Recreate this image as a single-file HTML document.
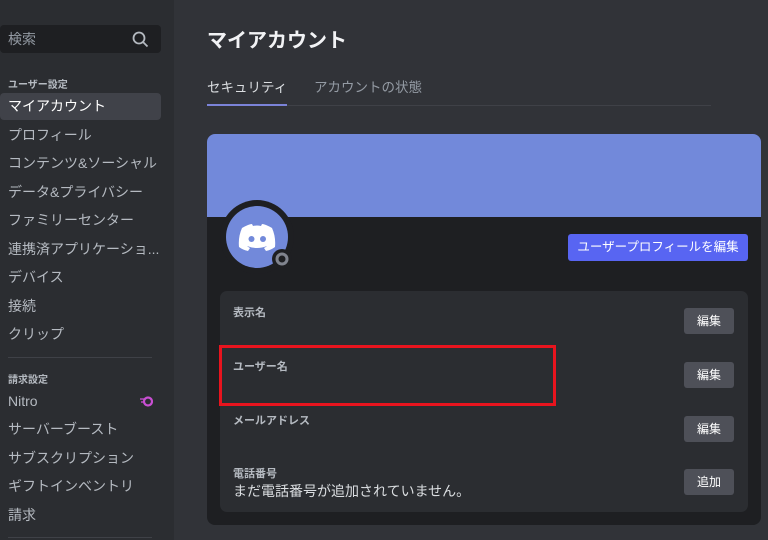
<!DOCTYPE html>
<html><head><meta charset="utf-8"><style>
*{margin:0;padding:0;box-sizing:border-box}
body{width:768px;height:540px;overflow:hidden;background:#313338;font-family:"Liberation Sans","Noto Sans CJK JP",sans-serif;position:relative}
.side{position:absolute;left:0;top:0;width:174px;height:540px;background:#2b2d31}
.search{position:absolute;left:0;top:25px;width:161px;height:28px;background:#1e1f22;border-radius:4px;color:#949ba4;font-size:14px;line-height:28px;padding-left:8px}
.hd{position:absolute;left:8px;font-size:10px;color:#b5bac1;font-weight:bold}
.it{position:absolute;left:0;width:161px;height:27px;line-height:27px;padding-left:8px;font-size:14px;color:#b5bac1;border-radius:4px;white-space:nowrap}
.sel{background:#404249;color:#fff}
.dv{position:absolute;left:8px;width:144px;height:1px;background:#3f4147}
.abs{position:absolute}
.btn{position:absolute;left:684px;width:50px;height:26px;background:#4e5058;border-radius:3px;color:#fff;font-size:12px;text-align:center;line-height:26px}
.lbl{position:absolute;left:233px;font-size:11px;color:#b5bac1;font-weight:bold}
</style></head><body>
<div class="side">
<div class="search">検索
<svg class="abs" style="left:132px;top:6px" width="17" height="17" viewBox="0 0 17 17"><circle cx="7" cy="7" r="5.5" fill="none" stroke="#b5bac1" stroke-width="1.8"/><line x1="11" y1="11" x2="15.5" y2="15.5" stroke="#b5bac1" stroke-width="1.8"/></svg></div>
<div class="hd" style="top:76px">ユーザー設定</div>
<div class="it sel" style="top:93px">マイアカウント</div>
<div class="it" style="top:122px">プロフィール</div>
<div class="it" style="top:150px">コンテンツ&amp;ソーシャル</div>
<div class="it" style="top:179px">データ&amp;プライバシー</div>
<div class="it" style="top:207px">ファミリーセンター</div>
<div class="it" style="top:236px">連携済アプリケーショ...</div>
<div class="it" style="top:264px">デバイス</div>
<div class="it" style="top:293px">接続</div>
<div class="it" style="top:321px">クリップ</div>
<div class="dv" style="top:357px"></div>
<div class="hd" style="top:371px">請求設定</div>
<div class="it" style="top:388px">Nitro</div>
<svg class="abs" style="left:140px;top:396px" width="13" height="11" viewBox="0 0 13 11"><circle cx="8" cy="5.5" r="4" fill="none" stroke="#c94fd3" stroke-width="2.2"/><line x1="0" y1="3" x2="4" y2="3" stroke="#c94fd3" stroke-width="1.3"/><line x1="1" y1="6" x2="4" y2="6" stroke="#c94fd3" stroke-width="1.3"/></svg>
<div class="it" style="top:416px">サーバーブースト</div>
<div class="it" style="top:445px">サブスクリプション</div>
<div class="it" style="top:473px">ギフトインベントリ</div>
<div class="it" style="top:502px">請求</div>
<div class="dv" style="top:537px"></div>
</div>
<div class="abs" style="left:207px;top:24px;font-size:20px;font-weight:bold;color:#f2f3f5">マイアカウント</div>
<div class="abs" style="left:207px;top:76px;font-size:13.5px;color:#dbdee1">セキュリティ</div>
<div class="abs" style="left:314px;top:76px;font-size:13.5px;color:#949ba4">アカウントの状態</div>
<div class="abs" style="left:207px;top:105px;width:504px;height:1px;background:#3f4147"></div>
<div class="abs" style="left:207px;top:104px;width:80px;height:2px;background:#7b83d8"></div>
<div class="abs" style="left:207px;top:134px;width:554px;height:391px;background:#1e1f22;border-radius:8px;overflow:hidden">
<div style="height:83px;background:#7289da"></div>
</div>
<svg class="abs" style="left:215px;top:196px" width="90" height="80" viewBox="215 196 90 80">
<circle cx="257" cy="237" r="37" fill="#1e1f22"/>
<circle cx="257" cy="237" r="31" fill="#7289da"/>
<path d="M242 228 q7-4 10-4 l1 2 q4-1 8 0 l1-2 q3 0 10 4 q4 9 3 19 q-4 3-9 4 l-2-3 q2-1 3-2 q-10 4-20 0 q1 1 3 2 l-2 3 q-5-1-9-4 q-1-10 3-19z" fill="#fff"/>
<circle cx="251.5" cy="239" r="3" fill="#7289da"/><circle cx="263" cy="239" r="3" fill="#7289da"/>
<circle cx="282" cy="259" r="10" fill="#1e1f22"/>
<circle cx="282" cy="259" r="5" fill="none" stroke="#80848e" stroke-width="3"/>
</svg>
<div class="abs" style="left:568px;top:234px;width:180px;height:27px;background:#5865f2;border-radius:3px;color:#fff;font-size:12.5px;line-height:27px;text-align:center">ユーザープロフィールを編集</div>
<div class="abs" style="left:220px;top:291px;width:528px;height:221px;background:#2b2d31;border-radius:7px"></div>
<div class="lbl" style="top:304px">表示名</div>
<div class="lbl" style="top:358px">ユーザー名</div>
<div class="lbl" style="top:412px">メールアドレス</div>
<div class="lbl" style="top:465px">電話番号</div>
<div class="abs" style="left:233px;top:481px;font-size:14px;color:#dbdee1">まだ電話番号が追加されていません。</div>
<div class="btn" style="top:308px">編集</div>
<div class="btn" style="top:362px">編集</div>
<div class="btn" style="top:416px">編集</div>
<div class="btn" style="top:469px">追加</div>
<div class="abs" style="left:219px;top:345px;width:337px;height:61px;border:3px solid #e8141e"></div>
</body></html>
